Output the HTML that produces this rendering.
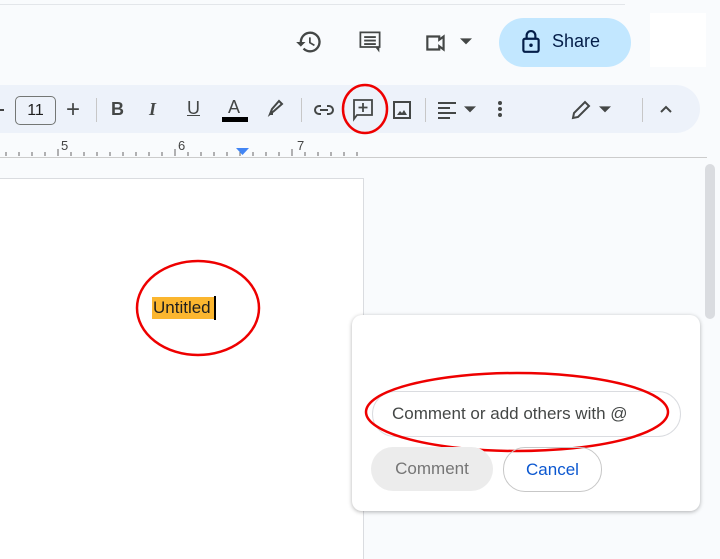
<!DOCTYPE html>
<html><head><style>
body{margin:0;width:720px;height:548px;background:#f9fbfd;font-family:"Liberation Sans",sans-serif;position:relative;overflow:hidden}
.a{position:absolute}
svg{position:absolute}
</style></head><body>
<div class="a" style="left:0;top:4px;width:625px;height:1px;background:#e3e6ea"></div>
<div class="a" style="left:650px;top:13px;width:56px;height:54px;background:#fff"></div>
<!-- history -->
<svg style="left:295px;top:28px" width="28" height="28" viewBox="0 0 24 24"><path d="M13 3a9 9 0 0 0-9 9H1l4 4 4-4H6a7 7 0 1 1 2 4.9l-1.4 1.4A9 9 0 1 0 13 3zm-1 5v5l4.3 2.5.7-1.2-3.5-2.1V8z" fill="#444746"/></svg>
<!-- comments -->
<svg style="left:356px;top:28px" width="28" height="28" viewBox="0 0 24 24"><path d="M3 3h18v14H6l-0 0H3z M4.5 4.5v11h15v-11z M7 7h10v1.6H7zm0 3h10v1.6H7zm0 3h10v1.6H7z M17 17h3v4z" fill="#444746" fill-rule="evenodd"/></svg>
<!-- video -->
<svg style="left:422px;top:30px" width="28" height="26" viewBox="0 0 24 24"><path d="M4 6h11v3l4-3v12l-4-3v3H4z" fill="none" stroke="#444746" stroke-width="2"/></svg>
<svg style="left:460px;top:38px" width="12" height="8" viewBox="0 0 10 6"><path d="M0 0h10L5 5z" fill="#444746"/></svg>
<div class="a" style="left:499px;top:18px;width:132px;height:49px;border-radius:25px;background:#c2e7ff"></div>
<svg style="left:520px;top:30px" width="22" height="24" viewBox="0 0 20 22"><rect x="3" y="8" width="14" height="12" rx="1.5" fill="none" stroke="#041e49" stroke-width="2"/><path d="M6 8V5a4 4 0 0 1 8 0v3" fill="none" stroke="#041e49" stroke-width="2"/><circle cx="10" cy="14" r="1.6" fill="#041e49"/></svg>
<div class="a" style="left:552px;top:31px;font-size:18px;color:#041e49">Share</div>
<!-- toolbar -->
<div class="a" style="left:-30px;top:85px;width:730px;height:48px;border-radius:24px;background:#edf2fa"></div>
<div class="a" style="left:0;top:109px;width:4px;height:2px;background:#444"></div>
<div class="a" style="left:15px;top:96px;width:39px;height:27px;border:1px solid #747775;border-radius:5px;font-size:16px;color:#1f1f1f;text-align:center;line-height:27px">11</div>
<div class="a" style="left:66px;top:96px;font-size:24px;color:#444746">+</div>
<div class="a" style="left:96px;top:98px;width:1px;height:24px;background:#c7c7c7"></div>
<div class="a" style="left:111px;top:99px;font-size:18px;font-weight:bold;color:#444746">B</div>
<div class="a" style="left:149px;top:99px;font-size:18px;font-style:italic;color:#444746;font-family:'Liberation Serif',serif;font-weight:bold">I</div>
<div class="a" style="left:187px;top:98px;font-size:18px;text-decoration:underline;color:#444746">U</div>
<div class="a" style="left:228px;top:97px;font-size:18px;color:#444746">A</div>
<div class="a" style="left:222px;top:117px;width:26px;height:5px;background:#000"></div>
<svg style="left:266px;top:98px" width="20" height="20" viewBox="0 0 20 20"><path d="M4 16l2-5 7-8 3 3-8 7z M4 16l3 0" fill="none" stroke="#444746" stroke-width="2"/></svg>
<div class="a" style="left:301px;top:98px;width:1px;height:24px;background:#c7c7c7"></div>
<svg style="left:313px;top:100px" width="22" height="20" viewBox="0 0 22 20"><path d="M8 6H6a4 4 0 0 0 0 8h2M14 6h2a4 4 0 0 1 0 8h-2M7 10h8" fill="none" stroke="#444746" stroke-width="2"/></svg>
<svg style="left:352px;top:98px" width="22" height="24" viewBox="0 0 22 24"><path d="M2 2h18v15H5l-3 4z" fill="none" stroke="#444746" stroke-width="1.8"/><path d="M11 5v9M6.5 9.5h9" stroke="#444746" stroke-width="1.8"/></svg>
<svg style="left:392px;top:100px" width="20" height="20" viewBox="0 0 20 20"><rect x="2" y="2" width="16" height="16" fill="none" stroke="#444746" stroke-width="2"/><path d="M5 15l3-4 2 2 2-3 3 5z" fill="#444746"/></svg>
<div class="a" style="left:425px;top:98px;width:1px;height:24px;background:#c7c7c7"></div>
<svg style="left:437px;top:100px" width="22" height="20" viewBox="0 0 22 20"><path d="M1 3h18M1 8h12M1 13h18M1 18h12" stroke="#444746" stroke-width="2"/></svg>
<svg style="left:464px;top:106px" width="12" height="8" viewBox="0 0 10 6"><path d="M0 0h10L5 5z" fill="#444746"/></svg>
<div class="a" style="left:498px;top:101px;width:4px;height:4px;border-radius:2px;background:#444746;box-shadow:0 6px #444746,0 12px #444746"></div>
<svg style="left:570px;top:99px" width="22" height="22" viewBox="0 0 22 22"><path d="M3 19l1-5L15 3l4 4L8 18z" fill="none" stroke="#444746" stroke-width="2"/></svg>
<svg style="left:599px;top:106px" width="12" height="8" viewBox="0 0 10 6"><path d="M0 0h10L5 5z" fill="#444746"/></svg>
<div class="a" style="left:642px;top:98px;width:1px;height:24px;background:#c7c7c7"></div>
<svg style="left:659px;top:104px" width="14" height="10" viewBox="0 0 14 10"><path d="M2 8l5-5 5 5" fill="none" stroke="#444746" stroke-width="2"/></svg>
<!-- red circle top -->
<svg style="left:340px;top:82px" width="52" height="54"><ellipse cx="25" cy="27" rx="22" ry="24" fill="none" stroke="#e00" stroke-width="2.5"/></svg>
<!-- ruler -->
<svg style="left:0;top:136px" width="720" height="24">
<g stroke="#666" stroke-width="1">
<path d="M6 16v4M19 16v4M32 16v4M45 16v4M58 13v7M71 16v4M84 16v4M97 16v4M110 16v4M123 16v4M136 16v4M149 16v4M162 16v4M175 13v7M188 16v4M201 16v4M214 16v4M227 16v4M240 16v4M253 16v4M266 16v4M279 16v4M292 13v7M305 16v4M318 16v4M331 16v4M344 16v4M357 16v4M370 16v4M383 16v4M396 16v4M409 16v4M422 16v4M435 16v4M448 16v4M461 16v4M474 16v4M487 16v4M500 16v4M513 16v4M526 16v4M539 16v4M552 16v4M565 16v4M578 16v4M591 16v4M604 16v4M617 16v4M630 16v4M643 16v4M656 16v4M669 16v4M682 16v4M695 16v4M708 16v4"/></g>
<path d="M0 21.5h707" stroke="#ccc"/>
<text x="61" y="14" font-size="13" fill="#444" font-family="Liberation Sans">5</text>
<text x="178" y="14" font-size="13" fill="#444" font-family="Liberation Sans">6</text>
<text x="297" y="14" font-size="13" fill="#444" font-family="Liberation Sans">7</text>
<path d="M236 12h13l-6.5 7z" fill="#4285f4"/>
</svg>
<div class="a" style="left:363px;top:142px;width:357px;height:15px;background:#f9fbfd"></div>
<!-- page -->
<div class="a" style="left:0;top:178px;width:363px;height:380px;background:#fff;border-top:1px solid #dadce0;border-right:1px solid #dadce0"></div>
<div class="a" style="left:152px;top:297px;height:22px;width:62px;background:#fbb62f"></div>
<div class="a" style="left:153px;top:297px;font-size:17px;color:#1f1f1f;line-height:22px">Untitled</div>
<div class="a" style="left:214px;top:296px;width:2px;height:24px;background:#000"></div>
<svg style="left:135px;top:258px" width="128" height="100"><ellipse cx="63" cy="50" rx="61" ry="47" fill="none" stroke="#e00" stroke-width="2.5"/></svg>
<!-- scrollbar -->
<div class="a" style="left:705px;top:164px;width:10px;height:155px;border-radius:5px;background:#dadce0"></div>
<!-- comment card -->
<div class="a" style="left:352px;top:315px;width:348px;height:196px;border-radius:10px;background:#fff;box-shadow:0 1px 4px rgba(0,0,0,.3)"></div>
<div class="a" style="left:372px;top:391px;width:307px;height:44px;border:1px solid #dadce0;border-radius:23px"></div>
<div class="a" style="left:392px;top:404px;font-size:17px;color:#444746">Comment or add others with @</div>
<svg style="left:364px;top:366px" width="310" height="90"><ellipse cx="153" cy="46" rx="151" ry="39" fill="none" stroke="#e00" stroke-width="2.5"/></svg>
<div class="a" style="left:371px;top:447px;width:122px;height:44px;border-radius:22px;background:#ececec;color:#757575;font-size:17px;text-align:center;line-height:44px">Comment</div>
<div class="a" style="left:503px;top:447px;width:97px;height:43px;border:1px solid #c7c7c7;border-radius:22px;color:#0b57d0;font-size:17px;text-align:center;line-height:43px">Cancel</div>
</body></html>
